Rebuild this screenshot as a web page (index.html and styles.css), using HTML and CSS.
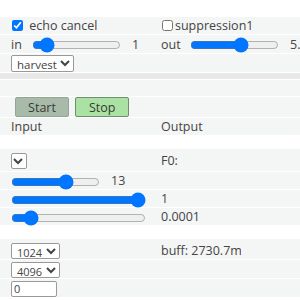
FILE: index.html
```html
<!DOCTYPE html>
<html lang="en">
<head>
    <meta charset="UTF-8">
    <title>Echo Cancel</title>
    <link rel="stylesheet" href="styles.css">
</head>
<body>

    <!-- audio settings -->
    <table class="panel">
        <tr class="row-check">
            <td class="col-in"><label><input type="checkbox" checked> echo cancel</label></td>
            <td class="col-out"><label class="plain"><input type="checkbox">suppression1</label></td>
        </tr>
        <tr class="row-slider">
            <td class="col-in"><span class="tag">in</span><input type="range" class="short" min="0" max="10" value="1"><span class="val">1</span></td>
            <td class="col-out"><span class="tag tag-out">out</span><input type="range" class="short" min="0" max="10" value="5.9" step="0.1"><span class="val">5.9</span></td>
        </tr>
        <tr class="row-select">
            <td class="col-in">
                <select class="sel sel-big">
                    <option>harvest</option>
                </select>
            </td>
            <td class="col-out"></td>
        </tr>
        <tr class="band"><td colspan="2"></td></tr>
        <tr class="row-empty"><td class="col-in"></td><td class="col-out"></td></tr>
        <tr class="row-buttons">
            <td class="col-in">
                <button class="btn btn-start">Start</button>
                <button class="btn btn-stop">Stop</button>
            </td>
            <td class="col-out"></td>
        </tr>
        <tr class="row-label">
            <td class="col-in">Input</td>
            <td class="col-out">Output</td>
        </tr>
    </table>

    <!-- pitch settings -->
    <table class="panel">
        <tr class="row-device">
            <td class="col-in"><select class="sel sel-empty"><option></option></select></td>
            <td class="col-out">F0:</td>
        </tr>
        <tr class="row-slider2">
            <td class="col-in"><input type="range" class="short" min="0" max="20" value="13"><span class="val">13</span></td>
            <td class="col-out"></td>
        </tr>
        <tr class="row-slider2">
            <td class="col-in"><input type="range" class="long" min="0" max="1" value="1" step="0.01"></td>
            <td class="col-out">1</td>
        </tr>
        <tr class="row-slider2">
            <td class="col-in"><input type="range" class="long" min="0" max="1" value="0.1" step="0.01"></td>
            <td class="col-out">0.0001</td>
        </tr>
    </table>

    <!-- buffer settings -->
    <table class="panel">
        <tr class="row-buf">
            <td class="col-in"><select class="sel"><option>1024</option></select></td>
            <td class="col-out"><span class="clip">buff: 2730.7ms</span></td>
        </tr>
        <tr class="row-buf">
            <td class="col-in"><select class="sel"><option>4096</option></select></td>
            <td class="col-out"></td>
        </tr>
        <tr class="row-buf">
            <td class="col-in"><input type="text" class="num" value="0"></td>
            <td class="col-out"></td>
        </tr>
    </table>

</body>
</html>
```

FILE: styles.css
```css
body {
    font-family: "Open Sans", Arial, sans-serif;
    font-size: 12.5px;
    color: #444;
    margin: 0;
    padding-top: 17px;
    background: #fff;
    width: 300px;
    overflow: hidden;
}
.panel {
    border-collapse: collapse;
    width: 330px;
    margin-bottom: 14px;
}
.panel td {
    background: #f4f5f5;
    border-top: 1px solid #fff;
    padding: 0;
    white-space: nowrap;
    vertical-align: middle;
}
.panel tr:first-child td {
    border-top: none;
}
.col-in {
    width: 149px;
    padding-left: 11px !important;
}
.col-out {
    padding-left: 1px !important;
}
.row-check td { height: 16px; }
.row-slider td { height: 18px; }
.row-select td { height: 18px; }
.row-empty td { height: 16px; }
.row-buttons td { height: 20px; }
.row-label td { height: 17px; }
.band td {
    height: 6px;
    background: #e9e9e9;
}
input[type="checkbox"] {
    margin: 0 3px 0 1px;
    width: 11px;
    height: 11px;
    vertical-align: -1px;
}
.plain input[type="checkbox"] {
    margin-right: 2px;
}
.tag {
    display: inline-block;
    width: 21px;
}
.tag-out { width: 29px; }
input[type="range"] {
    margin: 0;
    height: 14px;
    vertical-align: middle;
}
.short { width: 89px; }
.long { width: 135px; }
.val {
    display: inline-block;
    margin-left: 11px;
}
.sel {
    font-family: "Open Sans", Arial, sans-serif;
    font-size: 11px;
    color: #444;
    height: 16px;
    padding: 0 0 0 1px;
    border: 1px solid #999;
    border-radius: 2px;
    background: #fff;
    vertical-align: middle;
}
.sel-big { font-size: 11.5px; height: 17px; }
.sel-empty { width: 16px; height: 16px; }
.btn {
    font-family: "Open Sans", Arial, sans-serif;
    font-size: 12.5px;
    color: #3a3a3a;
    width: 54px;
    height: 20px;
    padding: 0;
    margin-left: 4px;
    border-radius: 2px;
    vertical-align: middle;
}
.btn-start {
    background: #a8bba8;
    border: 1px solid #95a595;
}
.btn-stop {
    background: #a9e2a2;
    border: 1px solid #6b906b;
    margin-left: 3px;
}
.row-device td { height: 22px; }
.row-slider2 td { height: 16px; }
.row-buf td { height: 17px; }
.row-buf:first-child td { padding-top: 2px; }
.clip {
    display: inline-block;
    width: 80px;
    overflow: hidden;
    vertical-align: middle;
}
.num {
    font-family: "Open Sans", Arial, sans-serif;
    font-size: 11px;
    color: #444;
    width: 40px;
    height: 14px;
    padding: 0 2px;
    border: 1px solid #999;
    border-radius: 2px;
    margin: 0;
    vertical-align: middle;
}
```
